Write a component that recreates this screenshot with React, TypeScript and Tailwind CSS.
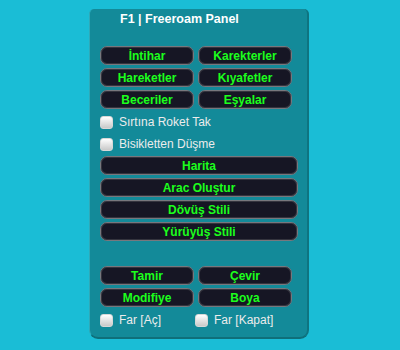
import React from "react";

const font = { fontFamily: '"Liberation Sans", Arial, sans-serif' };

function Btn({ label, wide }: { label: string; wide?: boolean }) {
  return (
    <button
      className={
        "h-[19px] rounded-[7px] border border-[#77777d] bg-[#161624] shadow-[inset_0_0_0_1px_#34343e] text-[12px] font-bold leading-none text-[#1cff1c] " +
        (wide ? "w-[198px]" : "w-[94px]")
      }
    >
      {label}
    </button>
  );
}

function Check({ label }: { label: string }) {
  return (
    <div className="flex items-center gap-[6px]">
      <span className="h-[13px] w-[13px] rounded-[3px] border border-[#d8d8d8] bg-gradient-to-b from-[#ffffff] to-[#c9c9c9]" />
      <span className="text-[12px] leading-none text-[#ececec]">{label}</span>
    </div>
  );
}

export default function App() {
  return (
    <div className="h-[350px] w-[400px] bg-[#1abdd6] pt-[9px]" style={font}>
      <div className="ml-[89px] h-[330px] w-[220px] rounded-t-[5px] rounded-b-[9px] border-l border-l-[#2fa9b8] border-r-2 border-r-[#0f7480] border-b-2 border-b-[#0f6f7a] bg-[#138a99] pl-[10px]">
        <div className="pl-[20px] pt-[3px] text-[12.5px] font-bold leading-[14px] text-white">
          F1 | Freeroam Panel
        </div>

        <div className="mt-[20px] flex flex-col gap-[3px]">
          <div className="flex gap-[4px]">
            <Btn label="İntihar" />
            <Btn label="Karekterler" />
          </div>
          <div className="flex gap-[4px]">
            <Btn label="Hareketler" />
            <Btn label="Kıyafetler" />
          </div>
          <div className="flex gap-[4px]">
            <Btn label="Beceriler" />
            <Btn label="Eşyalar" />
          </div>
        </div>

        <div className="mt-[2px] flex h-[22px] items-center">
          <Check label="Sırtına Roket Tak" />
        </div>
        <div className="flex h-[22px] items-center">
          <Check label="Bisikletten Düşme" />
        </div>

        <div className="mt-[1px] flex flex-col gap-[3px]">
          <Btn wide label="Harita" />
          <Btn wide label="Arac Oluştur" />
          <Btn wide label="Dövüş Stili" />
          <Btn wide label="Yürüyüş Stili" />
        </div>

        <div className="mt-[25px] flex flex-col gap-[3px]">
          <div className="flex gap-[4px]">
            <Btn label="Tamir" />
            <Btn label="Çevir" />
          </div>
          <div className="flex gap-[4px]">
            <Btn label="Modifiye" />
            <Btn label="Boya" />
          </div>
        </div>

        <div className="flex h-[26px] items-center">
          <div className="w-[95px]">
            <Check label="Far [Aç]" />
          </div>
          <Check label="Far [Kapat]" />
        </div>
      </div>
    </div>
  );
}
